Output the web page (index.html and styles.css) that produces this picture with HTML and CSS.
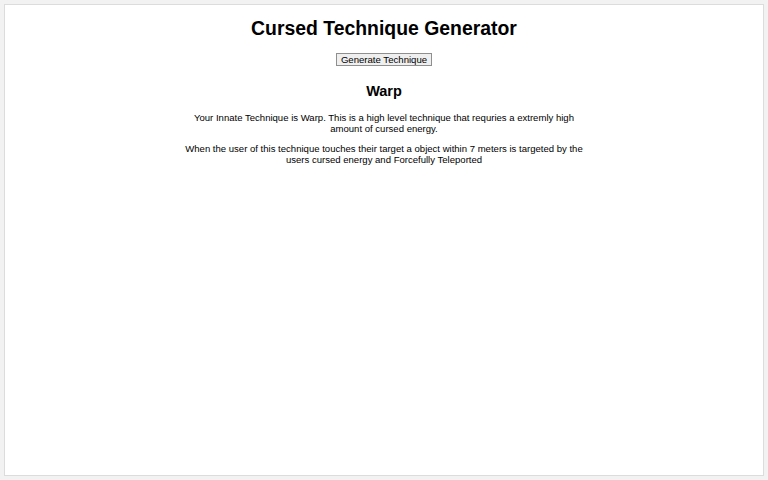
FILE: index.html
```html
<!DOCTYPE html>
<html lang="en">
<head>
<meta charset="utf-8">
<title>Cursed Technique Generator</title>
<link rel="stylesheet" href="styles.css">
</head>
<body>
<main class="card">
  <h1 class="title">Cursed Technique Generator</h1>
  <button class="generate" type="button">Generate Technique</button>
  <h2 class="name">Warp</h2>
  <p class="desc">Your Innate Technique is Warp. This is a high level technique that requries a extremly high amount of cursed energy.</p>
  <p class="desc">When the user of this technique touches their target a object within 7 meters is targeted by the users cursed energy and Forcefully Teleported</p>
</main>
</body>
</html>
```
FILE: styles.css
```css
html, body {
  margin: 0;
  height: 100%;
}

body {
  background: #f2f2f2;
  padding: 4px;
  box-sizing: border-box;
  font-family: "Liberation Sans", Arial, sans-serif;
  color: #000;
}

.card {
  background: #fff;
  border: 1px solid #dcdcdc;
  height: 100%;
  box-sizing: border-box;
  display: flex;
  flex-direction: column;
  align-items: center;
  text-align: center;
  padding-top: 12px;
}

.title {
  font-size: 19.4px;
  font-weight: bold;
  margin: 0 0 14px;
  line-height: 22px;
}

.generate {
  font-family: "Liberation Sans", Arial, sans-serif;
  font-size: 9.6px;
  line-height: 11px;
  padding: 0 4px;
  background: #efefef;
  border: 1px solid #8f8f8f;
  border-radius: 0;
  color: #000;
}

.name {
  font-size: 14.5px;
  font-weight: bold;
  margin: 16px 0 12px;
  line-height: 18px;
}

.desc {
  font-size: 9.55px;
  line-height: 11px;
  max-width: 400px;
  margin: 0 0 9px;
}
```
